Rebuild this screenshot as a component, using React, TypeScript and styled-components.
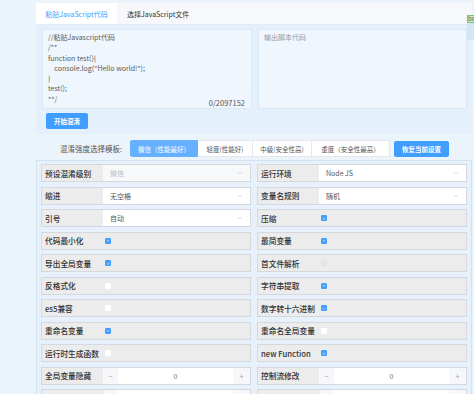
import React from "react";
import styled, { createGlobalStyle } from "styled-components";

const Global = createGlobalStyle`
  html, body { margin: 0; padding: 0; }
  body {
    background: #ecf4fb;
    font-family: "Noto Sans CJK SC", "Noto Sans", sans-serif;
    width: 474px; height: 394px; overflow: hidden;
  }
`;

const Page = styled.div`
  position: relative;
  width: 474px;
  height: 394px;
  overflow: hidden;
  padding: 3px 0 0 36px;
  box-sizing: border-box;
`;

const Main = styled.div`
  width: 436px;
  display: flex;
  flex-direction: column;
`;

const TabBar = styled.div`
  display: flex;
  height: 21px;
  background: #f6f8fb;
  border-bottom: 1px solid #e3ebf3;
`;

const Tab = styled.div<{ $active?: boolean }>`
  display: flex;
  align-items: center;
  justify-content: center;
  padding: 0 10px;
  width: ${(p) => (p.$active ? "81px" : "auto")};
  box-sizing: border-box;
  font-size: 7px;
  white-space: nowrap;
  color: ${(p) => (p.$active ? "#409eff" : "#333")};
  background: ${(p) => (p.$active ? "#fff" : "transparent")};
  ${(p) => (p.$active ? "padding: 0;" : "")}
`;

const EditorPanel = styled.div`
  background: linear-gradient(180deg, #e3effa 0%, #e4f0fb 100%);
  padding: 4px 5px 6px 6px;
  height: 109px;
  box-sizing: border-box;
  display: flex;
  flex-direction: column;
`;

const Editors = styled.div`
  display: grid;
  grid-template-columns: 210px 209px;
  column-gap: 6px;
`;

const CodeBox = styled.div`
  position: relative;
  height: 80px;
  box-sizing: border-box;
  background: #eff6fd;
  border: 1px solid #dbe7f2;
  padding: 2px 5px;
  font-size: 7px;
  line-height: 10.3px;
  color: #5a5a5a;
  white-space: pre;
`;

const Placeholder = styled.span`
  color: #9a9a9a;
`;

const Counter = styled.span`
  position: absolute;
  right: 6px;
  bottom: 0px;
  font-size: 7.5px;
  color: #555;
`;

const PrimaryButton = styled.div<{ $w: number }>`
  display: flex;
  align-items: center;
  justify-content: center;
  width: ${(p) => p.$w}px;
  height: 16px;
  background: #409eff;
  color: #fff;
  font-size: 6.5px;
  font-weight: 700;
  border-radius: 2px;
`;

const StartRow = styled.div`
  margin-top: 4px;
  padding-left: 4px;
`;

const TemplateRow = styled.div`
  display: flex;
  align-items: center;
  height: 26px;
  padding: 3px 0 0 24px;
  box-sizing: border-box;
`;

const TemplateLabel = styled.div`
  width: 64px;
  font-size: 7.5px;
  color: #555;
  white-space: nowrap;
  margin-right: 6px;
`;

const Segments = styled.div`
  display: flex;
  height: 17px;
  margin-right: 4px;
`;

const Segment = styled.div<{ $active?: boolean; $w: number }>`
  width: ${(p) => p.$w}px;
  display: flex;
  align-items: center;
  justify-content: center;
  font-size: 6.5px;
  white-space: nowrap;
  color: ${(p) => (p.$active ? "#fff" : "#555")};
  background: ${(p) => (p.$active ? "#66b1ff" : "#fff")};
  border: 1px solid ${(p) => (p.$active ? "#66b1ff" : "#e4e7ed")};
  border-left-width: ${(p) => (p.$active ? "1px" : "0")};
  box-sizing: border-box;
  border-radius: ${(p) => (p.$active ? "2px 0 0 2px" : "0")};
`;

const SettingsPanel = styled.div`
  border: 1px solid #d3e2f0;
  background: #e6f1fb;
  padding: 3px 4px 10px 4px;
`;

const Grid = styled.div`
  display: grid;
  grid-template-columns: 210px 210px;
  column-gap: 6px;
  row-gap: 4.5px;
`;

const Item = styled.div<{ $gray?: boolean }>`
  display: flex;
  height: 18px;
  box-sizing: border-box;
  border: 1px solid #d5d8dd;
  background: ${(p) => (p.$gray ? "#ececec" : "#fff")};
`;

const Label = styled.div`
  width: 61px;
  flex: none;
  display: flex;
  align-items: center;
  padding-left: 3px;
  box-sizing: border-box;
  background: #ececec;
  font-size: 7.7px;
  font-weight: 500;
  color: #303133;
  white-space: nowrap;
  overflow: visible;
`;

const SelectValue = styled.div<{ $disabled?: boolean }>`
  flex: 1;
  display: flex;
  align-items: center;
  justify-content: space-between;
  padding: 0 7px 0 7px;
  font-size: 7px;
  color: ${(p) => (p.$disabled ? "#b8bcc4" : "#555")};
  background: ${(p) => (p.$disabled ? "#f7f8fa" : "#fff")};
`;

const Chevron = styled.svg`
  width: 6px;
  height: 6px;
`;

const CheckValue = styled.div`
  flex: 1;
  display: flex;
  align-items: center;
  padding-left: 2px;
`;

const Box = styled.div<{ $on?: boolean; $disabled?: boolean }>`
  width: 6px;
  height: 6px;
  border-radius: 1px;
  box-sizing: border-box;
  display: flex;
  align-items: center;
  justify-content: center;
  background: ${(p) => (p.$disabled ? "#ececec" : p.$on ? "#409eff" : "#fff")};
  border: 1px solid ${(p) => (p.$disabled ? "#e2e2e2" : p.$on ? "#409eff" : "#fff")};
`;

const NumValue = styled.div`
  flex: 1;
  display: flex;
  background: #fff;
`;

const NumBtn = styled.div<{ $w: number }>`
  width: ${(p) => p.$w}px;
  flex: none;
  display: flex;
  align-items: center;
  justify-content: center;
  background: #f5f7fa;
  color: #aaa;
  font-size: 8px;
`;

const NumInput = styled.div`
  flex: 1;
  display: flex;
  align-items: center;
  justify-content: center;
  font-size: 7px;
  color: #666;
`;

const Badge = styled.div`
  position: absolute;
  right: 0;
  top: 15px;
  width: 7px;
  height: 8px;
  background: #cdeccd;
  border: 1px solid #7cc47c;
  border-right: none;
  box-sizing: border-box;
  font-size: 6px;
  line-height: 6px;
  color: #2f6f2f;
  overflow: hidden;
  white-space: nowrap;
`;

const ScrollThumb = styled.div`
  position: absolute;
  right: 0;
  top: 23px;
  width: 7px;
  height: 17px;
  background: #d3e6f7;
`;

type Row =
  | { kind: "select"; label: string; value: string; disabled?: boolean }
  | { kind: "check"; label: string; on: boolean; disabled?: boolean }
  | { kind: "num"; label: string };

const rows: [Row, Row][] = [
  [
    { kind: "select", label: "预设混淆级别", value: "微信", disabled: true },
    { kind: "select", label: "运行环境", value: "Node JS" },
  ],
  [
    { kind: "select", label: "缩进", value: "无空格" },
    { kind: "select", label: "变量名规则", value: "随机" },
  ],
  [
    { kind: "select", label: "引号", value: "自动" },
    { kind: "check", label: "压缩", on: true },
  ],
  [
    { kind: "check", label: "代码最小化", on: true },
    { kind: "check", label: "最简变量", on: true },
  ],
  [
    { kind: "check", label: "导出全局变量", on: true },
    { kind: "check", label: "首文件解析", on: true, disabled: true },
  ],
  [
    { kind: "check", label: "反格式化", on: false },
    { kind: "check", label: "字符串提取", on: true },
  ],
  [
    { kind: "check", label: "es5兼容", on: false },
    { kind: "check", label: "数字转十六进制", on: true },
  ],
  [
    { kind: "check", label: "重命名变量", on: true },
    { kind: "check", label: "重命名全局变量", on: false },
  ],
  [
    { kind: "check", label: "运行时生成函数", on: false },
    { kind: "check", label: "new Function", on: true },
  ],
  [
    { kind: "num", label: "全局变量隐藏" },
    { kind: "num", label: "控制流修改" },
  ],
  [
    { kind: "num", label: "字符串数组加密" },
    { kind: "num", label: "数组索引转换" },
  ],
];

const Check = ({ on, disabled }: { on: boolean; disabled?: boolean }) => (
  <Box $on={on} $disabled={disabled}>
    {on && (
      <svg width="5" height="5" viewBox="0 0 10 10">
        <path
          d="M2 5.2 L4.2 7.4 L8.2 2.8"
          fill="none"
          stroke={disabled ? "#c8c8c8" : "#fff"}
          strokeWidth="1.6"
        />
      </svg>
    )}
  </Box>
);

const Setting = ({ row }: { row: Row }) => {
  if (row.kind === "select") {
    return (
      <Item>
        <Label>{row.label}</Label>
        <SelectValue $disabled={row.disabled}>
          <span>{row.value}</span>
          <Chevron viewBox="0 0 10 10">
            <path d="M2 3.5 L5 6.5 L8 3.5" fill="none" stroke="#c0c4cc" strokeWidth="1" />
          </Chevron>
        </SelectValue>
      </Item>
    );
  }
  if (row.kind === "check") {
    return (
      <Item $gray>
        <Label>{row.label}</Label>
        <CheckValue>
          <Check on={row.on} disabled={row.disabled} />
        </CheckValue>
      </Item>
    );
  }
  return (
    <Item>
      <Label>{row.label}</Label>
      <NumValue>
        <NumBtn $w={15}>−</NumBtn>
        <NumInput>0</NumInput>
        <NumBtn $w={17}>+</NumBtn>
      </NumValue>
    </Item>
  );
};

const code = `//粘贴Javascript代码
/**
function test(){
    console.log("Hello world!");
}
test();
**/`;

export default function App() {
  return (
    <>
      <Global />
      <Page>
        <Main>
          <TabBar>
            <Tab $active>粘贴JavaScript代码</Tab>
            <Tab>选择JavaScript文件</Tab>
          </TabBar>
          <EditorPanel>
            <Editors>
              <CodeBox>
                {code}
                <Counter>0/2097152</Counter>
              </CodeBox>
              <CodeBox>
                <Placeholder>输出脚本代码</Placeholder>
              </CodeBox>
            </Editors>
            <StartRow>
              <PrimaryButton $w={42}>开始混淆</PrimaryButton>
            </StartRow>
          </EditorPanel>
          <TemplateRow>
            <TemplateLabel>混淆强度选择模板:</TemplateLabel>
            <Segments>
              <Segment $active $w={68}>微信（性能最好）</Segment>
              <Segment $w={55}>轻度(性能好)</Segment>
              <Segment $w={59}>中级(安全性高)</Segment>
              <Segment $w={78}>重度（安全性最高）</Segment>
            </Segments>
            <PrimaryButton $w={55}>恢复当前设置</PrimaryButton>
          </TemplateRow>
          <SettingsPanel>
            <Grid>
              {rows.map((pair, i) => (
                <React.Fragment key={i}>
                  <Setting row={pair[0]} />
                  <Setting row={pair[1]} />
                </React.Fragment>
              ))}
            </Grid>
          </SettingsPanel>
        </Main>
        <Badge>bo</Badge>
        <ScrollThumb />
      </Page>
    </>
  );
}
